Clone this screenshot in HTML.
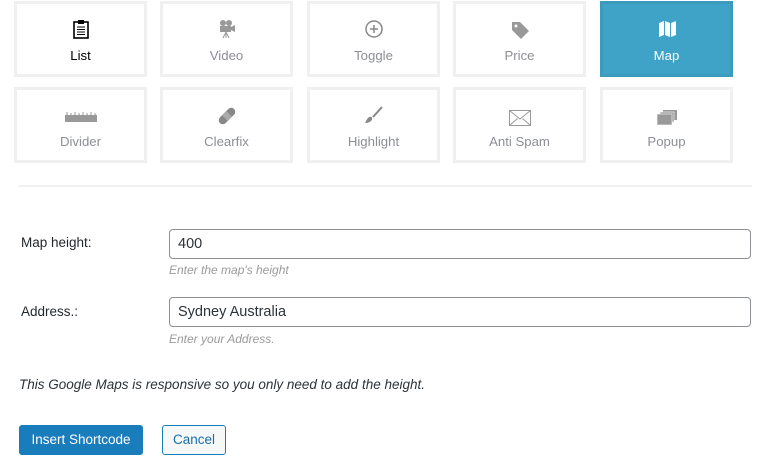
<!DOCTYPE html>
<html><head><meta charset="utf-8"><style>
*{box-sizing:border-box;margin:0;padding:0}
body{width:765px;height:473px;background:#fff;font-family:"Liberation Sans",sans-serif;position:relative;overflow:hidden;color:#23282d}
.t{position:absolute;width:133px;height:76px;border:3px solid #f0f0f0;background:#fff;text-align:center;color:#8c8f94;font-size:13.2px}
.t svg{position:absolute;left:50%;top:15px;transform:translateX(-50%)}
.t span{position:absolute;left:0;right:0;top:44px}
.t.a{background:#3ea3c7;border-color:#3a9bbd;color:#fff}
.lbl{position:absolute;left:21px;font-size:13.5px;color:#23282d}
.in{position:absolute;left:169px;width:582px;height:30px;border:1px solid #8c8f94;border-radius:4px;padding:0 8px;font-size:14.5px;line-height:28px;color:#2c3338}
.hint{position:absolute;left:169px;font-size:12px;font-style:italic;color:#9a9a9a}
</style></head><body>
<div class="t" style="left:14px;top:1px;color:#000"><svg width="16" height="20" viewBox="0 0 16 20"><rect x="1" y="3" width="14" height="16" fill="#fff" stroke="#000" stroke-width="1.6"/><rect x="5" y="1" width="6" height="4" fill="#000"/><path d="M4 8h8M4 10.5h8M4 13h8M4 15.5h8" stroke="#000" stroke-width="1"/></svg><span>List</span></div>
<div class="t" style="left:160px;top:1px"><svg width="20" height="20" viewBox="0 0 20 20" fill="#999"><circle cx="6" cy="4" r="3"/><circle cx="12" cy="4" r="3"/><rect x="3" y="7" width="11" height="6"/><path d="M14 8l4-2v7l-4-2z"/><path d="M9 13l-3 6M9 13v6M9 13l3 6" stroke="#999" fill="none"/></svg><span>Video</span></div>
<div class="t" style="left:307px;top:1px"><svg width="20" height="20" viewBox="0 0 20 20"><circle cx="10" cy="10" r="8" fill="none" stroke="#888" stroke-width="1.5"/><path d="M10 6v8M6 10h8" stroke="#888" stroke-width="1.5"/></svg><span>Toggle</span></div>
<div class="t" style="left:453px;top:1px"><svg width="22" height="22" viewBox="0 0 22 22"><path d="M3 3h8l9 9-8 8-9-9z" fill="#999"/><circle cx="7" cy="7" r="1.5" fill="#fff"/></svg><span>Price</span></div>
<div class="t a" style="left:600px;top:1px"><svg width="20" height="20" viewBox="0 0 20 20" fill="#fff"><path d="M2 4l5-2v14l-5 2zM8 2l5 2v14l-5-2zM14 4l5-2v14l-5 2z"/></svg><span>Map</span></div>
<div class="t" style="left:14px;top:87px"><svg width="32" height="10" viewBox="0 0 32 10" style="top:22px"><rect x="0" y="3" width="32" height="7" fill="#999"/><path d="M2 3V0M6 3V1M10 3V0M14 3V1M18 3V0M22 3V1M26 3V0M30 3V1" stroke="#999"/></svg><span>Divider</span></div>
<div class="t" style="left:160px;top:87px"><svg width="22" height="22" viewBox="0 0 22 22"><rect x="1" y="7" width="20" height="8" rx="4" fill="#888" transform="rotate(-45 11 11)"/><rect x="8" y="7" width="6" height="8" fill="#aaa" transform="rotate(-45 11 11)"/></svg><span>Clearfix</span></div>
<div class="t" style="left:307px;top:87px"><svg width="20" height="20" viewBox="0 0 20 20"><path d="M18 2L9 12" stroke="#888" stroke-width="2"/><path d="M4 13c3-3 6 0 3 3-2 2-5 2-6 2 1-1 1-3 3-5z" fill="#888"/></svg><span>Highlight</span></div>
<div class="t" style="left:453px;top:87px"><svg width="22" height="16" viewBox="0 0 22 16" style="top:20px"><rect x="0.5" y="0.5" width="21" height="15" fill="#fff" stroke="#999"/><path d="M0.5 0.5L11 9 21.5 0.5M0.5 15.5l8-7M21.5 15.5l-8-7" fill="none" stroke="#999"/></svg><span>Anti Spam</span></div>
<div class="t" style="left:600px;top:87px"><svg width="20" height="16" viewBox="0 0 20 16" style="top:20px" fill="#999"><rect x="6" y="0" width="14" height="10"/><rect x="3" y="2" width="14" height="10" stroke="#fff" stroke-width="0.6"/><rect x="0" y="4" width="15" height="11" stroke="#fff" stroke-width="0.6"/></svg><span>Popup</span></div>
<div style="position:absolute;left:19px;top:185px;width:733px;height:2px;background:#f0f0f0"></div>
<div class="lbl" style="top:235px">Map height:</div>
<div class="in" style="top:229px">400</div>
<div class="hint" style="top:263px">Enter the map's height</div>
<div class="lbl" style="top:304px">Address.:</div>
<div class="in" style="top:297px">Sydney Australia</div>
<div class="hint" style="top:332px">Enter your Address.</div>
<div style="position:absolute;left:19px;top:377px;font-size:13.5px;font-style:italic;color:#2c3338">This Google Maps is responsive so you only need to add the height.</div>
<div style="position:absolute;left:19px;top:425px;width:124px;height:30px;background:#1a7dbb;border-radius:3px;color:#fff;font-size:13.5px;line-height:30px;text-align:center">Insert Shortcode</div>
<div style="position:absolute;left:162px;top:425px;width:64px;height:30px;background:#f6f7f7;border:1px solid #1a7dbb;border-radius:3px;color:#1a6fa8;font-size:13.5px;line-height:28px;text-align:center">Cancel</div>
</body></html>
